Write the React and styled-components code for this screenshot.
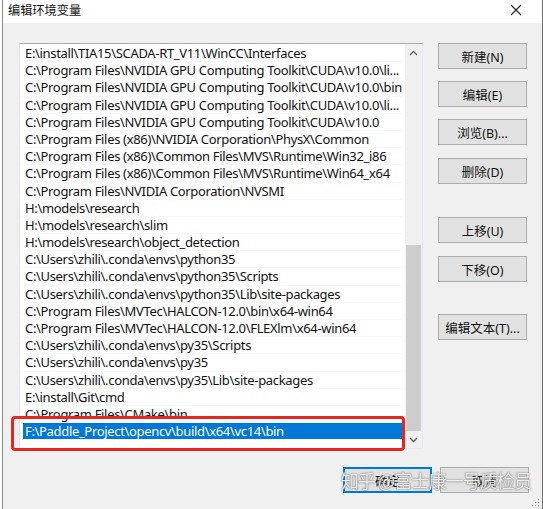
import styled, { createGlobalStyle } from 'styled-components'



const paths = [
  'E:\\install\\TIA15\\SCADA-RT_V11\\WinCC\\Interfaces',
  'C:\\Program Files\\NVIDIA GPU Computing Toolkit\\CUDA\\v10.0\\li...',
  'C:\\Program Files\\NVIDIA GPU Computing Toolkit\\CUDA\\v10.0\\bin',
  'C:\\Program Files\\NVIDIA GPU Computing Toolkit\\CUDA\\v10.0\\li...',
  'C:\\Program Files\\NVIDIA GPU Computing Toolkit\\CUDA\\v10.0',
  'C:\\Program Files (x86)\\NVIDIA Corporation\\PhysX\\Common',
  'C:\\Program Files (x86)\\Common Files\\MVS\\Runtime\\Win32_i86',
  'C:\\Program Files (x86)\\Common Files\\MVS\\Runtime\\Win64_x64',
  'C:\\Program Files\\NVIDIA Corporation\\NVSMI',
  'H:\\models\\research',
  'H:\\models\\research\\slim',
  'H:\\models\\research\\object_detection',
  'C:\\Users\\zhili\\.conda\\envs\\python35',
  'C:\\Users\\zhili\\.conda\\envs\\python35\\Scripts',
  'C:\\Users\\zhili\\.conda\\envs\\python35\\Lib\\site-packages',
  'C:\\Program Files\\MVTec\\HALCON-12.0\\bin\\x64-win64',
  'C:\\Program Files\\MVTec\\HALCON-12.0\\FLEXlm\\x64-win64',
  'C:\\Users\\zhili\\.conda\\envs\\py35\\Scripts',
  'C:\\Users\\zhili\\.conda\\envs\\py35',
  'C:\\Users\\zhili\\.conda\\envs\\py35\\Lib\\site-packages',
  'E:\\install\\Git\\cmd',
  'C:\\Program Files\\CMake\\bin',
  'F:\\Paddle_Project\\opencv\\build\\x64\\vc14\\bin',
]

const sideButtons = [
  { label: '新建(N)', gap: 0 },
  { label: '编辑(E)', gap: 12 },
  { label: '浏览(B)...', gap: 12 },
  { label: '删除(D)', gap: 13 },
  { label: '上移(U)', gap: 33 },
  { label: '下移(O)', gap: 13 },
  { label: '编辑文本(T)...', gap: 32 },
]



const App = () => {

  return (
    <>
      <GlobalStyle />
      <Window>

        <TitleBar>
          <Title>编辑环境变量</Title>
          <Close>
            <svg width = "12" height = "12" viewBox = "0 0 12 12">
              <path d = "M1 1 L11 11 M11 1 L1 11" stroke = "#222" strokeWidth = "1.1" />
            </svg>
          </Close>
        </TitleBar>

        <Body>

          <Main>

            <ListBox>
              <Rows>
                {
                  paths.map((p, i) => (
                    <Row key = { i } selected = { i === paths.length - 1 }>
                      <RowText selected = { i === paths.length - 1 }>{ p }</RowText>
                    </Row>
                  ))
                }
              </Rows>
              <ScrollBar>
                <Arrow>
                  <svg width = "9" height = "6" viewBox = "0 0 9 6">
                    <path d = "M1 5 L4.5 1.5 L8 5" fill = "none" stroke = "#606060" strokeWidth = "1.4" />
                  </svg>
                </Arrow>
                <Track>
                  <Thumb />
                </Track>
                <Arrow>
                  <svg width = "9" height = "6" viewBox = "0 0 9 6">
                    <path d = "M1 1 L4.5 4.5 L8 1" fill = "none" stroke = "#606060" strokeWidth = "1.4" />
                  </svg>
                </Arrow>
              </ScrollBar>
            </ListBox>

            <Side>
              {
                sideButtons.map(b => (
                  <Button key = { b.label } gap = { b.gap }>{ b.label }</Button>
                ))
              }
            </Side>

          </Main>

          <Footer>
            <Button primary>确定</Button>
            <Button>取消</Button>
            <Watermark>知乎 @富士康一号质检员</Watermark>
            <Grip>
              <svg width = "8" height = "8" viewBox = "0 0 8 8">
                <rect x = "6" y = "0" width = "1.2" height = "1.2" fill = "#a0a0a0" />
                <rect x = "3" y = "3" width = "1.2" height = "1.2" fill = "#a0a0a0" />
                <rect x = "6" y = "3" width = "1.2" height = "1.2" fill = "#a0a0a0" />
                <rect x = "0" y = "6" width = "1.2" height = "1.2" fill = "#a0a0a0" />
                <rect x = "3" y = "6" width = "1.2" height = "1.2" fill = "#a0a0a0" />
                <rect x = "6" y = "6" width = "1.2" height = "1.2" fill = "#a0a0a0" />
              </svg>
            </Grip>
          </Footer>

        </Body>

      </Window>
    </>
  )

}


const GlobalStyle = createGlobalStyle`
  body {
    margin: 0;
    font-family: "Noto Sans", "Noto Sans CJK SC", sans-serif;
    overflow: hidden;
  }
`

const Window = styled.div`
  width: 541px;
  height: 509px;
  box-sizing: border-box;
  display: flex;
  flex-direction: column;
  border-left: 1px solid #8c8c8c;
  border-right: 1px solid #6e6e6e;
  margin-left: 2px;
`

const TitleBar = styled.div`
  height: 23px;
  background: #fff;
  display: flex;
  align-items: center;
  padding: 0 20px 0 5px;
`

const Title = styled.span`
  font-family: "Noto Sans CJK SC", sans-serif;
  font-size: 12.2px;
  color: #111;
  margin-top: -3px;
`

const Close = styled.span`
  margin-left: auto;
  display: flex;
  margin-top: -4px;
`

const Body = styled.div`
  flex: 1;
  background: #f0f0f0;
  padding: 20px 0 0 16px;
  position: relative;
`

const Main = styled.div`
  display: flex;
  align-items: flex-start;
`

const ListBox = styled.div`
  width: 404px;
  height: 406px;
  flex: none;
  box-sizing: border-box;
  border: 1px solid #828790;
  border-color: #abadb3 #e3e9ef #e3e9ef #e2e3ea;
  background: #fff;
  display: flex;
`

const Rows = styled.div`
  flex: 1;
  min-width: 0;
  padding: 1px 3px 0 3px;
`

const Row = styled.div`
  height: 17.2px;
  position: relative;
  border-bottom: 1px solid #f6f6f6;
  box-sizing: border-box;
  background: ${ p => (p.selected ? '#0078d7' : 'transparent') };
  ${ p => p.selected && `
    &::after {
      content: '';
      position: absolute;
      left: -12px;
      right: -3px;
      top: -7px;
      bottom: -12px;
      border: 3px solid #e8261f;
      border-radius: 4px;
    }
  ` }
`

const RowText = styled.span`
  display: block;
  font-size: 13px;
  letter-spacing: -0.33px;
  line-height: 16px;
  padding-left: 2px;
  color: ${ p => (p.selected ? '#fff' : '#111') };
  white-space: nowrap;
  overflow: hidden;
`

const ScrollBar = styled.div`
  width: 17px;
  flex: none;
  background: #f0f0f0;
  display: flex;
  flex-direction: column;
`

const Arrow = styled.div`
  height: 17px;
  display: flex;
  align-items: center;
  justify-content: center;
`

const Track = styled.div`
  flex: 1;
  display: flex;
  flex-direction: column;
  justify-content: flex-end;
  padding: 0 1px;
`

const Thumb = styled.div`
  height: 186px;
  background: #cdcdcd;
`

const Side = styled.div`
  display: flex;
  flex-direction: column;
  margin-left: 15px;
`

const Button = styled.button`
  width: 89px;
  height: 26px;
  margin-top: ${ p => p.gap || 0 }px;
  background: #e1e1e1;
  border: 1px solid ${ p => (p.primary ? '#0078d7' : '#adadad') };
  box-shadow: ${ p => (p.primary ? 'inset 0 0 0 1px #0078d7' : 'none') };
  font-family: "Noto Sans", "Noto Sans CJK SC", sans-serif;
  font-size: 12.5px;
  color: #111;
  padding: 0;
  border-radius: 0;
`

const Footer = styled.div`
  display: flex;
  justify-content: flex-end;
  gap: 8px;
  margin-top: 18px;
  padding-right: 13px;
  position: relative;
`

const Watermark = styled.span`
  position: absolute;
  right: 11px;
  top: 0;
  font-family: "Noto Sans CJK SC", sans-serif;
  font-size: 18px;
  letter-spacing: -0.9px;
  line-height: 26px;
  color: rgba(255, 255, 255, 0.9);
  text-shadow: 0 0 1px rgba(80, 80, 80, 0.9), 0 0 2px rgba(80, 80, 80, 0.5);
  pointer-events: none;
`

const Grip = styled.span`
  position: absolute;
  right: 2px;
  bottom: -14px;
  display: flex;
`

export default App
